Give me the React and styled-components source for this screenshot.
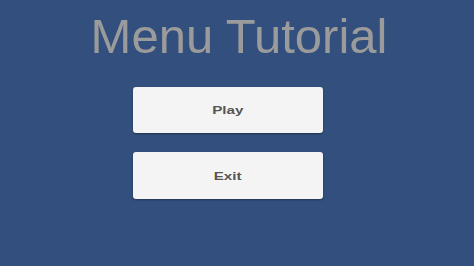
import styled, { createGlobalStyle } from "styled-components";

const GlobalStyle = createGlobalStyle`
  html, body {
    margin: 0;
    padding: 0;
    background: #324f7d;
  }
  #root {
    height: 266px;
  }
`;

const Screen = styled.div`
  width: 474px;
  height: 266px;
  background: #324f7d;
  display: flex;
  flex-direction: column;
  align-items: center;
  padding-top: 12px;
  box-sizing: border-box;
  overflow: hidden;
`;

const Title = styled.h1`
  margin: 0 0 0 4px;
  font-family: "Liberation Sans", Arial, sans-serif;
  font-weight: normal;
  font-size: 49px;
  line-height: 49px;
  color: #9b9b9b;
`;

const ButtonGroup = styled.div`
  display: flex;
  flex-direction: column;
  gap: 19px;
  margin-top: 26px;
  margin-right: 18px;
`;

const MenuButton = styled.button`
  width: 190px;
  height: ${(p) => p.$h || 46}px;
  border: none;
  border-radius: 3px;
  background: #f4f4f4;
  box-shadow: 0 1px 2px rgba(0, 0, 0, 0.35);
  display: flex;
  align-items: center;
  justify-content: center;
  padding: 0;
  cursor: pointer;
`;

const Label = styled.span`
  font-family: "Liberation Sans", Arial, sans-serif;
  font-weight: bold;
  font-size: 11.5px;
  color: #555555;
  transform: scaleX(1.32);
  display: inline-block;
`;

const App = () => {
  return (
    <>
      <GlobalStyle />
      <Screen>
        <Title>Menu Tutorial</Title>
        <ButtonGroup>
          <MenuButton $h={46}>
            <Label>Play</Label>
          </MenuButton>
          <MenuButton $h={47}>
            <Label>Exit</Label>
          </MenuButton>
        </ButtonGroup>
      </Screen>
    </>
  );
};

export default App;
